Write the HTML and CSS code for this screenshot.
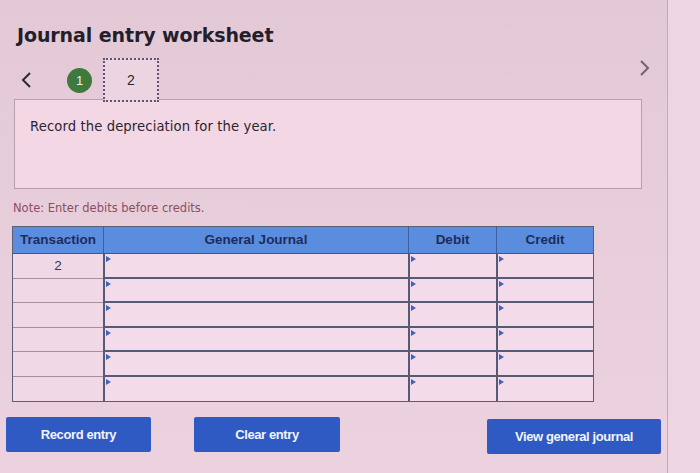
FILE: index.html
```html
<!DOCTYPE html>
<html>
<head>
<meta charset="utf-8">
<link rel="stylesheet" href="styles.css">
</head>
<body>
<div class="screen">
  <div class="page">
    <h1 class="title">Journal entry worksheet</h1>
    <div class="nav">
      <svg class="chev" width="12" height="18" viewBox="0 0 12 18"><path d="M10 2 L3 9 L10 16" fill="none" stroke="#2a2a2e" stroke-width="2"/></svg>
      <span class="step done">1</span>
      <span class="step current">2</span>
      <span class="spacer"></span>
      <svg class="chev next" width="12" height="18" viewBox="0 0 12 18"><path d="M2 2 L9 9 L2 16" fill="none" stroke="#6c6670" stroke-width="2"/></svg>
    </div>
    <div class="prompt">Record the depreciation for the year.</div>
    <p class="note">Note: Enter debits before credits.</p>
    <div class="journal">
      <div class="th">Transaction</div>
      <div class="th">General Journal</div>
      <div class="th">Debit</div>
      <div class="th">Credit</div>

      <div class="tx">2</div><div class="in"></div><div class="in"></div><div class="in"></div>
      <div class="tx"></div><div class="in"></div><div class="in"></div><div class="in"></div>
      <div class="tx"></div><div class="in"></div><div class="in"></div><div class="in"></div>
      <div class="tx"></div><div class="in"></div><div class="in"></div><div class="in"></div>
      <div class="tx"></div><div class="in"></div><div class="in"></div><div class="in"></div>
      <div class="tx"></div><div class="in"></div><div class="in"></div><div class="in"></div>
    </div>
    <div class="actions">
      <button class="btn">Record entry</button>
      <button class="btn clear">Clear entry</button>
      <span class="spacer"></span>
      <button class="btn view">View general journal</button>
    </div>
  </div>
  <div class="edge"></div>
</div>
</body>
</html>
```

FILE: styles.css
```css
html, body {
  margin: 0;
  padding: 0;
}
body {
  background: #e7cdda;
  font-family: "DejaVu Sans", Verdana, sans-serif;
  width: 700px;
  height: 473px;
  overflow: hidden;
}
.screen {
  display: flex;
  height: 473px;
}
.page {
  width: 668px;
  height: 473px;
  box-sizing: border-box;
  border-right: 1px solid #c4aab8;
  background: linear-gradient(180deg, #e3c8d6 0%, #e8cedb 50%, #ebd2de 100%);
  display: flex;
  flex-direction: column;
}
.edge {
  flex: 1;
  background: #edd6e1;
}
.title {
  margin: 24px 0 0 17px;
  font-size: 19px;
  font-weight: bold;
  letter-spacing: -0.1px;
  color: #231e2a;
  line-height: 22px;
}
.nav {
  display: flex;
  align-items: center;
  height: 42px;
  margin: 13px 0 0 20px;
  padding-right: 16px;
}
.chev {
  display: block;
}
.step {
  font-family: "Liberation Sans", Arial, sans-serif;
  font-size: 14px;
  display: flex;
  align-items: center;
  justify-content: center;
}
.done {
  width: 25px;
  height: 25px;
  border-radius: 50%;
  background: #3e7a3c;
  color: #e8f0e6;
  font-size: 13px;
  margin-left: 35px;
}
.current {
  width: 52px;
  height: 40px;
  margin-left: 11px;
  border: 2px dotted #5c5478;
  color: #2b2630;
  background: #ecd4e0;
  position: relative;
  z-index: 2;
}
.spacer {
  flex: 1;
}
.next {
  margin-top: -24px;
}
.prompt {
  margin: -2px 25px 0 14px;
  height: 90px;
  box-sizing: border-box;
  border: 1px solid #b7a0ae;
  background: #f3d7e5;
  padding: 19px 15px;
  font-size: 13.2px;
  letter-spacing: 0.1px;
  color: #2a2530;
}
.note {
  margin: 12px 0 0 13px;
  font-size: 11.5px;
  color: #8c4d5e;
  letter-spacing: 0;
}
.journal {
  margin: 11px 0 0 12px;
  width: 580px;
  display: grid;
  grid-template-columns: 90px 305px 88px 97px;
  grid-template-rows: 27px repeat(6, 24.5px);
  border: 1px solid #5c5f72;
  box-sizing: content-box;
}
.th {
  background: #5b8ddf;
  color: #1d2c5c;
  font-family: "Liberation Sans", Arial, sans-serif;
  font-weight: bold;
  font-size: 13.5px;
  display: flex;
  align-items: center;
  justify-content: center;
  padding-bottom: 2px;
  border-left: 1px solid #3f5f9e;
  border-bottom: 1px solid #3e568c;
}
.th:first-child {
  border-left: none;
}
.tx {
  background: #f1d8e6;
  border-bottom: 1px solid #a3909c;
  font-family: "Liberation Sans", Arial, sans-serif;
  font-size: 13.5px;
  color: #3a3540;
  display: flex;
  align-items: center;
  justify-content: center;
}
.tx:nth-last-child(4) {
  border-bottom: none;
}
.in {
  background: #f4dbe9;
  border-left: 2px solid #555b74;
  border-bottom: 2px solid #555b74;
  position: relative;
}
.in:nth-last-child(-n+3) {
  border-bottom: none;
}
.in::before {
  content: "";
  position: absolute;
  left: 1px;
  top: 2px;
  border-left: 5px solid #3b63c2;
  border-top: 3px solid transparent;
  border-bottom: 3px solid transparent;
}
.actions {
  display: flex;
  margin: 15px 6px 0 6px;
  align-items: flex-start;
}
.btn {
  font-family: "Liberation Sans", Arial, sans-serif;
  font-weight: bold;
  font-size: 13px;
  letter-spacing: -0.4px;
  color: #f2f4fb;
  background: #2f5ac3;
  border: none;
  border-radius: 2px;
  width: 145px;
  height: 35px;
  padding: 0;
}
.clear {
  margin-left: 43px;
  width: 146px;
}
.view {
  width: 174px;
  margin-top: 2px;
}
```
